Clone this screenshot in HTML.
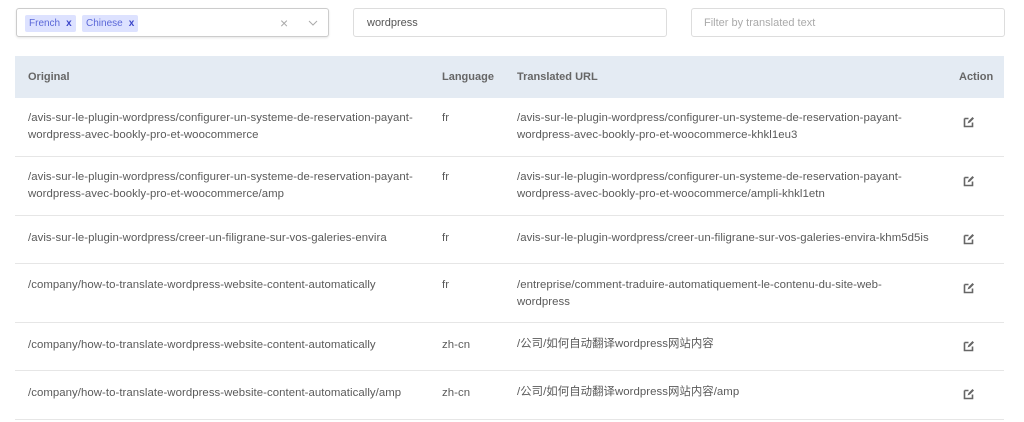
<!DOCTYPE html><html><head><meta charset="utf-8"><style>
body{margin:0;background:#fff;font-family:"Liberation Sans","Noto Sans CJK SC",sans-serif;color:#555;font-size:11px;}
.box{position:absolute;top:8px;height:29px;border:1px solid #ddd;border-radius:3px;background:#fff;box-sizing:border-box;}
.tag{position:absolute;top:6px;height:17px;background:#dde2ff;color:#5a67d8;font-size:10px;line-height:17px;padding:0 4px;border-radius:2px;}
.tag b{color:#3b46c9;margin-left:6px;font-size:10px}
.hdr{position:absolute;left:15px;top:56px;width:989px;height:42px;background:#e4ebf3;}
.hdr span{position:absolute;top:15px;font-weight:bold;font-size:11px;color:#666}
.row{position:absolute;left:15px;width:989px;border-bottom:1px solid #e6e6e6;box-sizing:border-box;}
.row div{position:absolute;line-height:17px;font-size:11.4px;letter-spacing:0.05px;color:#5a5a5a;white-space:nowrap}
.c1{left:13px}.c2{left:427px}.c3{left:502px}
.ic{position:absolute;left:948px;width:12px;height:12px}
</style></head><body>
<div class="box" style="left:16px;width:313px;border-color:#ccc;box-shadow:0 1px 2px rgba(0,0,0,.1)">
<span class="tag" style="left:8px">French<b>x</b></span>
<span class="tag" style="left:65px">Chinese<b>x</b></span>
<span style="position:absolute;left:263px;top:6px;color:#aaa;font-size:14px">×</span>
<svg style="position:absolute;left:291px;top:11px" width="10" height="7"><path d="M1 1L5 5L9 1" stroke="#aaa" fill="none"/></svg>
</div>
<div class="box" style="left:353px;width:314px"><span style="position:absolute;left:13px;top:8px;color:#555">wordpress</span></div>
<div class="box" style="left:691px;width:314px"><span style="position:absolute;left:12px;top:8px;color:#aaa">Filter by translated text</span></div>
<div class="hdr"><span style="left:13px">Original</span><span style="left:427px">Language</span><span style="left:502px">Translated URL</span><span style="left:944px">Action</span></div>
<svg width="0" height="0" style="position:absolute"><defs><g id="e"><path d="M1.5 2.5h4M1.5 2.5v8h8v-4" stroke="#666" stroke-width="1.6" fill="none"/><path d="M4.5 7.5l1-2.5 4-4 1.5 1.5-4 4z" fill="#666"/></g></defs></svg>
<div class="row" style="top:98px;height:59px"><div class="c1" style="top:12px">/avis-sur-le-plugin-wordpress/configurer-un-systeme-de-reservation-payant-<br>wordpress-avec-bookly-pro-et-woocommerce</div><div class="c2" style="top:12px">fr</div><div class="c3" style="top:12px">/avis-sur-le-plugin-wordpress/configurer-un-systeme-de-reservation-payant-<br>wordpress-avec-bookly-pro-et-woocommerce-khkl1eu3</div><svg class="ic" style="top:18px" viewBox="0 0 12 12"><use href="#e"/></svg></div>
<div class="row" style="top:157px;height:59px"><div class="c1" style="top:12px">/avis-sur-le-plugin-wordpress/configurer-un-systeme-de-reservation-payant-<br>wordpress-avec-bookly-pro-et-woocommerce/amp</div><div class="c2" style="top:12px">fr</div><div class="c3" style="top:12px">/avis-sur-le-plugin-wordpress/configurer-un-systeme-de-reservation-payant-<br>wordpress-avec-bookly-pro-et-woocommerce/ampli-khkl1etn</div><svg class="ic" style="top:18px" viewBox="0 0 12 12"><use href="#e"/></svg></div>
<div class="row" style="top:216px;height:48px"><div class="c1" style="top:14px">/avis-sur-le-plugin-wordpress/creer-un-filigrane-sur-vos-galeries-envira</div><div class="c2" style="top:14px">fr</div><div class="c3" style="top:14px">/avis-sur-le-plugin-wordpress/creer-un-filigrane-sur-vos-galeries-envira-khm5d5is</div><svg class="ic" style="top:17px" viewBox="0 0 12 12"><use href="#e"/></svg></div>
<div class="row" style="top:264px;height:59px"><div class="c1" style="top:13px">/company/how-to-translate-wordpress-website-content-automatically</div><div class="c2" style="top:13px">fr</div><div class="c3" style="top:13px">/entreprise/comment-traduire-automatiquement-le-contenu-du-site-web-<br>wordpress</div><svg class="ic" style="top:18px" viewBox="0 0 12 12"><use href="#e"/></svg></div>
<div class="row" style="top:323px;height:48px"><div class="c1" style="top:14px">/company/how-to-translate-wordpress-website-content-automatically</div><div class="c2" style="top:14px">zh-cn</div><div class="c3" style="top:13px">/公司/如何自动翻译wordpress网站内容</div><svg class="ic" style="top:17px" viewBox="0 0 12 12"><use href="#e"/></svg></div>
<div class="row" style="top:371px;height:49px"><div class="c1" style="top:14px">/company/how-to-translate-wordpress-website-content-automatically/amp</div><div class="c2" style="top:14px">zh-cn</div><div class="c3" style="top:13px">/公司/如何自动翻译wordpress网站内容/amp</div><svg class="ic" style="top:17px" viewBox="0 0 12 12"><use href="#e"/></svg></div>
</body></html>
